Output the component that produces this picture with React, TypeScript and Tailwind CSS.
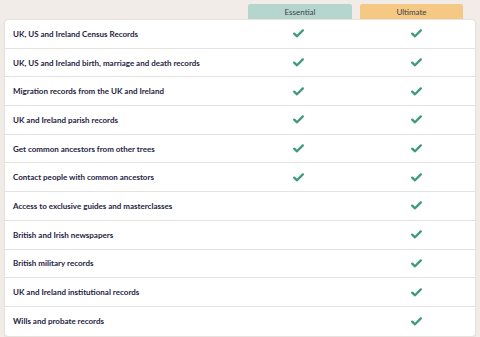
const rows: { label: string; essential: boolean }[] = [
  { label: 'UK, US and Ireland Census Records', essential: true },
  { label: 'UK, US and Ireland birth, marriage and death records', essential: true },
  { label: 'Migration records from the UK and Ireland', essential: true },
  { label: 'UK and Ireland parish records', essential: true },
  { label: 'Get common ancestors from other trees', essential: true },
  { label: 'Contact people with common ancestors', essential: true },
  { label: 'Access to exclusive guides and masterclasses', essential: false },
  { label: 'British and Irish newspapers', essential: false },
  { label: 'British military records', essential: false },
  { label: 'UK and Ireland institutional records', essential: false },
  { label: 'Wills and probate records', essential: false },
]

function Check() {
  return (
    <svg width="11" height="9" viewBox="0 0 11 9" className="block">
      <path
        d="M1.2 4.6 L4 7.3 L9.8 1.4"
        fill="none"
        stroke="#3f9a7c"
        strokeWidth="2.3"
        strokeLinecap="round"
        strokeLinejoin="round"
      />
    </svg>
  )
}

export default function App() {
  return (
    <div
      className="w-[480px] h-[337px] bg-[#f1ece8] pt-1 px-1 overflow-hidden"
      style={{ fontFamily: 'Lato, "Open Sans", sans-serif' }}
    >
      <div className="flex gap-2 pl-[244px] h-4">
        <div className="w-[104px] h-[15px] bg-[#b5d6cd] rounded-t-[2px] flex items-center justify-center text-[8px] text-[#3d3d4a]">
          Essential
        </div>
        <div className="w-[103px] h-[15px] bg-[#f5c983] rounded-t-[2px] flex items-center justify-center text-[8px] text-[#3d3d4a]">
          Ultimate
        </div>
      </div>
      <div className="bg-white rounded-[4px] border border-[#e7e2de] shadow-[0_1px_2px_rgba(0,0,0,0.06)] -mt-px">
        {rows.map((r, i) => (
          <div
            key={r.label}
            className={`grid grid-cols-[1fr_118px_118px] items-center h-[28.7px] ${
              i < rows.length - 1 ? 'border-b border-[#e6e2df]' : ''
            }`}
          >
            <div className="pl-[8px] text-[8px] font-bold text-[#25233f] leading-none">{r.label}</div>
            <div className="flex justify-center">{r.essential && <Check />}</div>
            <div className="flex justify-center">
              <Check />
            </div>
          </div>
        ))}
      </div>
    </div>
  )
}
